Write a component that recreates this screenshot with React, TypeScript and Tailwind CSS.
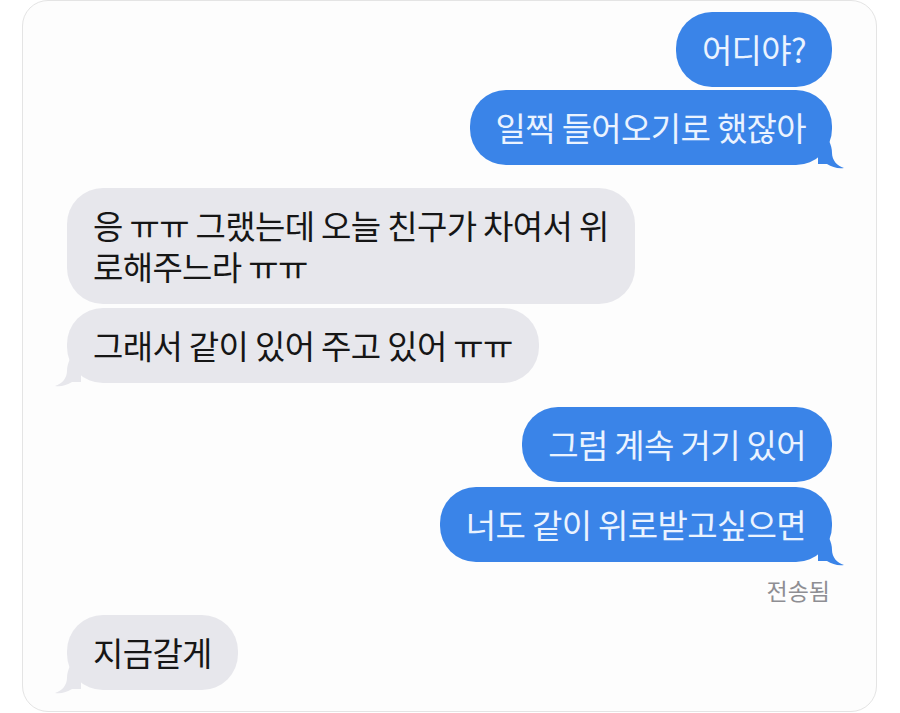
import React from 'react';

type Msg = {
  id: number;
  from: 'me' | 'them';
  lines: string[];
  tail?: boolean;
  mt: string;
};

const messages: Msg[] = [
  { id: 1, from: 'me', lines: ['어디야?'], mt: 'mt-0' },
  { id: 2, from: 'me', lines: ['일찍 들어오기로 했잖아'], tail: true, mt: 'mt-[3px]' },
  { id: 3, from: 'them', lines: ['응 ㅠㅠ 그랬는데 오늘 친구가 차여서 위', '로해주느라 ㅠㅠ'], mt: 'mt-[23px]' },
  { id: 4, from: 'them', lines: ['그래서 같이 있어 주고 있어 ㅠㅠ'], tail: true, mt: 'mt-[4px]' },
  { id: 5, from: 'me', lines: ['그럼 계속 거기 있어'], mt: 'mt-[24px]' },
  { id: 6, from: 'me', lines: ['너도 같이 위로받고싶으면'], tail: true, mt: 'mt-[5px]' },
];

// bubble tail, drawn for the right side; flipped for incoming messages
const Tail = ({ color, left }: { color: string; left?: boolean }) => (
  <svg
    width="28"
    height="28"
    viewBox="0 0 28 28"
    className={
      left
        ? 'absolute -left-[14px] -bottom-[4px] -scale-x-100'
        : 'absolute -right-[14px] -bottom-[4px]'
    }
  >
    <path d="M0 0 H11 C13 4 14 8 14 12 C14 19 19 25 26 27 C20 28 14 26 9 23 H0 Z" fill={color} />
  </svg>
);

const Bubble = ({ msg }: { msg: Msg }) => {
  const me = msg.from === 'me';
  return (
    <div className={`flex ${me ? 'justify-end' : 'justify-start'} ${msg.mt}`}>
      <div
        className={`relative rounded-[36px] px-[26px] py-[17px] text-[33px] leading-[41px] tracking-[-0.02em] whitespace-nowrap ${
          me ? 'bg-[#3a84e8] text-[#eaf3ff]' : 'bg-[#e7e7ec] text-[#161616]'
        }`}
      >
        {msg.tail && <Tail color={me ? '#3a84e8' : '#e7e7ec'} left={!me} />}
        <div className="relative">
          {msg.lines.map((l, i) => (
            <div key={i}>{l}</div>
          ))}
        </div>
      </div>
    </div>
  );
};

export default function App() {
  return (
    <div className="min-h-screen bg-white font-['Noto_Sans_CJK_KR','Noto_Sans',sans-serif]">
      <div className="ml-[22px] w-[855px] h-[712px] rounded-[26px] border border-[#e4e4e4] bg-[#fdfdfd] px-[44px] pt-[11px]">
        {messages.map((m) => (
          <Bubble key={m.id} msg={m} />
        ))}
        <div className="mt-[15px] flex justify-end pr-[2px]">
          <span className="text-[23px] leading-[26px] text-[#8e8e93]">전송됨</span>
        </div>
        <Bubble msg={{ id: 7, from: 'them', lines: ['지금갈게'], tail: true, mt: 'mt-[12px]' }} />
      </div>
    </div>
  );
}
